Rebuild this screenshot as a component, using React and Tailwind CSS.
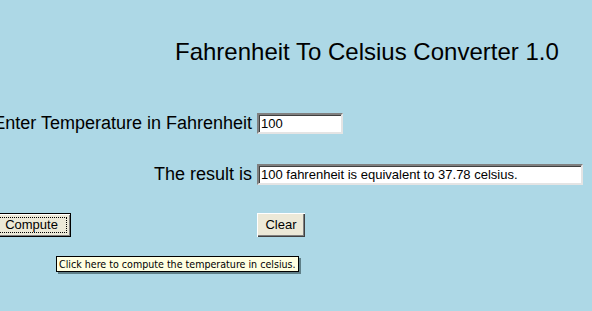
import { useState } from "react";

export default function App() {
  const [temp, setTemp] = useState("100");
  const [result, setResult] = useState("100 fahrenheit is equivalent to 37.78 celsius.");

  const compute = () => {
    const f = parseFloat(temp);
    if (isNaN(f)) return setResult("");
    setResult(`${temp} fahrenheit is equivalent to ${((f - 32) * 5 / 9).toFixed(2)} celsius.`);
  };

  return (
    <div className="relative min-h-[311px] w-full overflow-hidden bg-[#add8e6] text-black font-['Liberation_Sans',Arial,sans-serif]">
      <h1 className="pl-[175px] pt-[38px] text-[24px] leading-[28px] whitespace-nowrap">
        Fahrenheit To Celsius Converter 1.0
      </h1>

      <div className="mt-[47px] grid grid-cols-[252px_auto] gap-x-[5px]">
        <div className="flex h-[21px] items-center justify-end whitespace-nowrap text-[18px]">
          Enter Temperature in Fahrenheit
        </div>
        <div className="flex items-center">
          <input
            value={temp}
            onChange={(e) => setTemp(e.target.value)}
            className="h-[21px] w-[86px] border-2 border-t-[#808080] border-l-[#808080] border-b-[#e4e4e4] border-r-[#e4e4e4] bg-white px-[2px] text-[13px] outline-none shadow-[inset_1px_1px_#404040]"
          />
        </div>

        <div className="mt-[30px] flex h-[21px] items-center justify-end whitespace-nowrap text-[18px]">
          The result is
        </div>
        <div className="mt-[30px] flex items-center">
          <input
            value={result}
            readOnly
            className="h-[21px] w-[326px] border-2 border-t-[#808080] border-l-[#808080] border-b-[#e4e4e4] border-r-[#e4e4e4] bg-white px-[2px] text-[13px] outline-none shadow-[inset_1px_1px_#404040]"
          />
        </div>

        <div className="mt-[28px] flex">
          <button
            onClick={compute}
            className="ml-[-8px] flex h-[24px] w-[79px] items-center justify-center border border-black bg-[#ece9d8] p-[3px] text-[13px] shadow-[inset_1px_1px_#fff,inset_-1px_-1px_#808080]"
          >
            <span className="flex h-full w-full items-center justify-center border border-dotted border-black">
              Compute
            </span>
          </button>
        </div>
        <div className="mt-[28px] flex">
          <button
            onClick={() => { setTemp(""); setResult(""); }}
            className="h-[24px] w-[48px] bg-[#ece9d8] text-[13px] shadow-[inset_1px_1px_#fff,inset_-1px_-1px_#404040,inset_-2px_-2px_#808080]"
          >
            Clear
          </button>
        </div>
      </div>

      <div className="absolute left-[56px] top-[256px] border border-black bg-[#ffffe1] px-[2px] text-[10.6px] leading-[14px] whitespace-nowrap shadow-[2px_2px_0_#5f7f88] font-['DejaVu_Sans_Condensed','DejaVu_Sans',sans-serif]">
        Click here to compute the temperature in celsius.
      </div>
    </div>
  );
}
